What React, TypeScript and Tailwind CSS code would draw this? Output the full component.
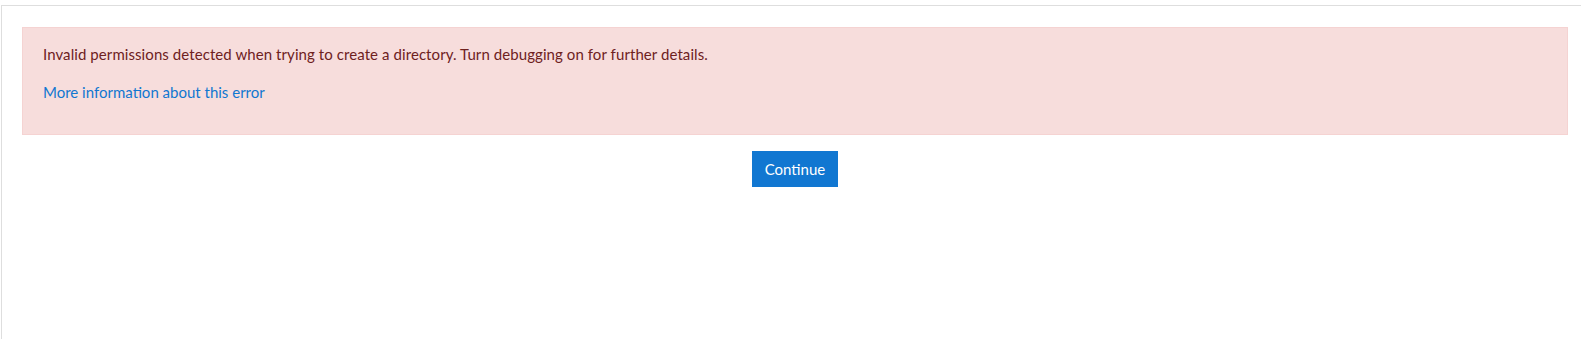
import React from "react";

export default function App() {
  return (
    <div
      className="min-h-[339px] bg-white pt-[5px]"
      style={{ fontFamily: "Lato, 'Open Sans', sans-serif" }}
    >
      <div className="ml-px min-h-[334px] border-l border-t border-[#dedede] pl-5 pr-[13px] pt-[21px]">
        {/* Error box */}
        <div className="border border-[#f5d3d2] bg-[#f7dddc] px-5 pt-[15px] pb-[15px] text-[15px] leading-[22px] text-[#6e211e]">
          <p className="mb-4 tracking-[0.08px]">
            Invalid permissions detected when trying to create a directory. Turn debugging on for further details.
          </p>
          <p className="mb-4">
            <a href="#" className="text-[#1177d1] hover:underline">
              More information about this error
            </a>
          </p>
        </div>

        <div className="mt-4 flex justify-center">
          <button
            type="button"
            className="h-9 w-[86px] border border-[#1177d1] bg-[#1177d1] text-[15px] leading-[22px] text-white"
          >
            Continue
          </button>
        </div>
      </div>
    </div>
  );
}
